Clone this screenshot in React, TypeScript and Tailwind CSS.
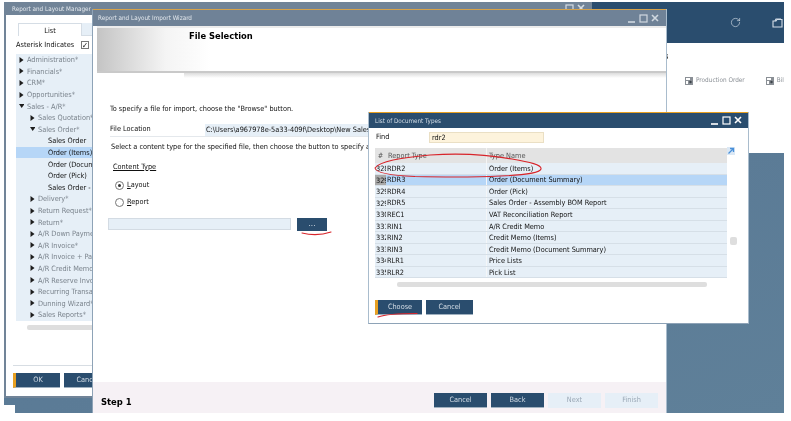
import { RotateCw } from "lucide-react";

const font = "font-['DejaVu_Sans_Condensed','Liberation_Sans',sans-serif]";

type TreeRow = { label: string; indent: number; arrow?: "right" | "down"; dark?: boolean; selected?: boolean };

const treeRows: TreeRow[] = [
  { label: "Administration*", indent: 0, arrow: "right" },
  { label: "Financials*", indent: 0, arrow: "right" },
  { label: "CRM*", indent: 0, arrow: "right" },
  { label: "Opportunities*", indent: 0, arrow: "right" },
  { label: "Sales - A/R*", indent: 0, arrow: "down" },
  { label: "Sales Quotation*", indent: 11, arrow: "right" },
  { label: "Sales Order*", indent: 11, arrow: "down" },
  { label: "Sales Order", indent: 24, dark: true },
  { label: "Order (Items)", indent: 24, dark: true, selected: true },
  { label: "Order (Document Summary)", indent: 24, dark: true },
  { label: "Order (Pick)", indent: 24, dark: true },
  { label: "Sales Order - Assembly", indent: 24, dark: true },
  { label: "Delivery*", indent: 11, arrow: "right" },
  { label: "Return Request*", indent: 11, arrow: "right" },
  { label: "Return*", indent: 11, arrow: "right" },
  { label: "A/R Down Payment", indent: 11, arrow: "right" },
  { label: "A/R Invoice*", indent: 11, arrow: "right" },
  { label: "A/R Invoice + Payment", indent: 11, arrow: "right" },
  { label: "A/R Credit Memo", indent: 11, arrow: "right" },
  { label: "A/R Reserve Invoice", indent: 11, arrow: "right" },
  { label: "Recurring Transactions", indent: 11, arrow: "right" },
  { label: "Dunning Wizard*", indent: 11, arrow: "right" },
  { label: "Sales Reports*", indent: 11, arrow: "right" },
];

const docRows = [
  ["328", "RDR2", "Order (Items)"],
  ["329", "RDR3", "Order (Document Summary)"],
  ["329", "RDR4", "Order (Pick)"],
  ["329", "RDR5", "Sales Order - Assembly BOM Report"],
  ["330", "REC1", "VAT Reconciliation Report"],
  ["331", "RIN1", "A/R Credit Memo"],
  ["332", "RIN2", "Credit Memo (Items)"],
  ["333", "RIN3", "Credit Memo (Document Summary)"],
  ["334", "RLR1", "Price Lists"],
  ["335", "RLR2", "Pick List"],
];

function WindowControls({ color }: { color: string }) {
  return (
    <svg width="32" height="9" viewBox="0 0 32 9" fill="none" stroke={color} strokeWidth="1.2">
      <path d="M1 8h7" strokeWidth="1.6" />
      <rect x="13" y="1" width="7" height="7" />
      <path d="M25 1l6 6M31 1l-6 6" strokeWidth="1.6" />
    </svg>
  );
}

function DarkButton({ label, accent, className }: { label: string; accent?: boolean; className: string }) {
  return (
    <div
      className={`h-[15px] bg-[#2a4d6e] text-[#d5dee7] text-[7.3px] leading-[14px] text-center border-b border-[#9fb0bf] ${
        accent ? "border-l-[3px] border-l-[#e8a021]" : ""
      } ${className}`}
    >
      {label}
    </div>
  );
}

function LightButton({ label }: { label: string }) {
  return <div className="w-[53px] h-[15px] bg-[#e6eff7] text-[#9aa8b6] text-[7.3px] leading-[14px] text-center">{label}</div>;
}

function Arrow({ dir }: { dir?: "right" | "down" }) {
  if (!dir) return <span className="w-[5px] shrink-0" />;
  return (
    <svg width="5" height="6" viewBox="0 0 5 6" className="shrink-0 mr-[3px]" fill="#1d1d1d">
      {dir === "right" ? <path d="M0.5 0L4.5 3L0.5 6Z" /> : <path d="M0 1H5.5L2.7 5Z" />}
    </svg>
  );
}

function ManagerWindow() {
  return (
    <div className="absolute left-[4px] top-[2px] w-[588px] h-[396px] bg-[#718498] flex flex-col">
      <div className="h-[13px] pl-[8px] pr-[7px] flex items-center justify-between text-[6.3px] leading-[13px] text-[#e3e8ed]">
        <span>Report and Layout Manager</span>
        <WindowControls color="#d6dde4" />
      </div>
      <div className="flex-1 ml-[2px] mr-[1px] mb-[2px] bg-white pl-[7px] pt-[8px] flex flex-col">
        <div className="flex h-[13px]">
          <div className="ml-[5px] w-[64px] border-x border-t border-[#d5dde5] text-[7.3px] text-[#111] text-center leading-[13px] bg-white">List</div>
          <div className="flex-1 bg-[#e6eff7] border-b border-[#d5dde5]" />
        </div>
        <div className="h-[12px] mt-[3px] flex items-center text-[7.3px] leading-[12px] text-[#111] whitespace-nowrap">
          <span className="w-[64px] ml-[3px]">Asterisk Indicates</span>
          <span className="w-[8px] h-[8px] ml-[1px] border border-[#777] text-[8px] leading-[7px] text-center font-bold text-black">✓</span>
        </div>
        <div className="mt-[3px] ml-[3px] h-[267px] w-[76px] bg-[#e6eff7] overflow-hidden">
          {treeRows.map((r) => (
            <div
              key={r.label}
              className={`h-[11.6px] flex items-center whitespace-nowrap text-[7.3px] leading-[11px] pl-[3px] ${r.selected ? "bg-[#b6d6f7]" : ""} ${
                r.dark ? "text-[#111]" : "text-[#7a838c]"
              }`}
            >
              <span className="shrink-0" style={{ width: r.indent }} />
              <Arrow dir={r.arrow} />
              {r.label}
            </div>
          ))}
        </div>
        <div className="mt-[4px] ml-[14px] h-[5px] w-[80px] rounded-[2px] bg-[#dedede]" />
        <div className="mt-[35px] h-[1px] w-[80px] bg-[#d7dde3]" />
        <div className="mt-[7px] flex gap-[4px]">
          <DarkButton label="OK" accent className="w-[47px]" />
          <DarkButton label="Cancel" className="w-[47px]" />
        </div>
      </div>
    </div>
  );
}

function WizardWindow() {
  return (
    <div className="absolute left-[92px] top-[9px] w-[575px] h-[404px] flex flex-col bg-white border-r border-[#a9bccd] border-l border-l-[#8ea3b7]">
      <div className="h-[17px] bg-[#6f8297] border-t border-[#d6a24a] pl-[5px] pr-[7px] flex items-center justify-between text-[6.3px] text-[#e3e8ed]">
        <span>Report and Layout Import Wizard</span>
        <WindowControls color="#d0d8e0" />
      </div>
      <div className="ml-[4px] h-[47px] border-t-2 border-t-[#ececec] border-b-2 border-[#c9c9c9] bg-[linear-gradient(90deg,#c4c4c4_0%,#f4f4f4_12%,#ffffff_20%)] pl-[92px] pt-[1px]">
        <div className="text-[9.3px] font-bold text-black leading-[14px]">File Selection</div>
      </div>
      <div className="ml-[91px] h-[5px] bg-[linear-gradient(180deg,#dcdcdc,#ffffff)]" />
      <div className="flex-1 pl-[17px] pt-[25px] text-[7.3px] text-[#111] flex flex-col">
        <div className="h-[12px] leading-[12px]">To specify a file for import, choose the "Browse" button.</div>
        <div className="mt-[8px] h-[14px] flex items-center border-b border-[#e4e8ec] w-[540px]">
          <span className="w-[95px]">File Location</span>
          <span className="flex-1 h-[12px] bg-[#e6eff7] leading-[12px] px-[1px] overflow-hidden whitespace-nowrap">
            C:\Users\a967978e-5a33-409f\Desktop\New Sales Order (Items).rpt
          </span>
        </div>
        <div className="mt-[4px] ml-[1px] h-[12px] leading-[12px] whitespace-nowrap">
          Select a content type for the specified file, then choose the button to specify a destination.
        </div>
        <div className="mt-[8px] ml-[3px] h-[12px] leading-[12px] underline">Content Type</div>
        <div className="mt-[6px] ml-[5px] h-[12px] leading-[12px] flex items-center gap-[3px]">
          <span className="w-[9px] h-[9px] rounded-full border border-[#777] flex items-center justify-center">
            <span className="w-[3px] h-[3px] rounded-full bg-[#333]" />
          </span>
          <span><u>L</u>ayout</span>
        </div>
        <div className="mt-[5px] ml-[5px] h-[12px] leading-[12px] flex items-center gap-[3px]">
          <span className="w-[9px] h-[9px] rounded-full border border-[#777]" />
          <span><u>R</u>eport</span>
        </div>
        <div className="mt-[10px] -ml-[2px] flex gap-[6px]">
          <div className="w-[183px] h-[12px] bg-[#e6eff7] border border-[#d3dbe3]" />
          <div className="w-[30px] h-[13px] bg-[#2a4d6e] text-[#d5dee7] text-[8px] leading-[11px] text-center">...</div>
        </div>
      </div>
      <div className="h-[31px] bg-[#f6f1f5] flex items-start justify-between pl-[8px] pr-[8px]">
        <span className="mt-[13px] text-[9.4px] font-bold text-black leading-[14px]">Step 1</span>
        <div className="mt-[11px] flex gap-[4px]">
          <DarkButton label="Cancel" className="w-[53px]" />
          <DarkButton label="Back" className="w-[53px]" />
          <LightButton label="Next" />
          <LightButton label="Finish" />
        </div>
      </div>
    </div>
  );
}

function DocTypesDialog() {
  return (
    <div className="absolute left-[368px] top-[112px] w-[381px] h-[212px] flex flex-col bg-white border-x border-b border-[#a9bccd] border-b-[#8ea3b7]">
      <div className="h-[16px] bg-[#2a4d6e] border-t border-[#e8a021] pl-[6px] pr-[6px] flex items-center justify-between text-[6.3px] text-[#d5dee7]">
        <span>List of Document Types</span>
        <WindowControls color="#ffffff" />
      </div>
      <div className="mt-[3px] ml-[7px] h-[12px] flex items-center text-[7.3px] text-[#111]">
        <span className="w-[53px]">Find</span>
        <span className="w-[115px] h-[11px] bg-[#fdf3dc] border border-[#eadfc4] leading-[9px] px-[2px]">rdr2</span>
      </div>
      <div className="mt-[5px] ml-[6px] w-[352px] text-[7.3px] leading-[11px] text-[#111]">
        <div className="h-[15px] bg-[#e3e3e3] flex items-center text-[#555]">
          <span className="w-[11px] text-center">#</span>
          <span className="w-[100px] pl-[2px]">Report Type</span>
          <span className="w-[1px] h-full bg-[#f4f4f4]" />
          <span className="pl-[2px]">Type Name</span>
        </div>
        {docRows.map((r, i) => (
          <div key={r[1] + i} className={`h-[11.55px] flex items-center border-b border-[#d6dfe7] ${i === 1 ? "bg-[#b6d6f7]" : "bg-[#e6eff7]"}`}>
            <span className={`w-[11px] h-full overflow-hidden pl-[1px] ${i === 1 ? "bg-[#a9a9a9]" : ""}`}>{r[0]}</span>
            <span className="w-[100px] pl-[1px]">{r[1]}</span>
            <span className="w-[1px] h-full bg-[#f4f6f8]" />
            <span className="pl-[2px] whitespace-nowrap">{r[2]}</span>
          </div>
        ))}
      </div>
      <div className="mt-[4px] ml-[28px] w-[310px] h-[5px] rounded-[2px] bg-[#dedede]" />
      <div className="mt-[13px] ml-[6px] flex gap-[4px]">
        <DarkButton label="Choose" accent className="w-[47px]" />
        <DarkButton label="Cancel" className="w-[47px]" />
      </div>
      {/* expand arrow */}
      <svg className="absolute left-[358px] top-[35px]" width="8" height="8" viewBox="0 0 8 8" fill="none" stroke="#4a90d9" strokeWidth="1.3">
        <rect width="8" height="8" fill="#dbe8f5" stroke="none" />
        <path d="M1.5 6.5L6.5 1.5M3 1.5h3.5V5" />
      </svg>
      {/* list scrollbar */}
      <div className="absolute left-[361px] top-[125px] w-[7px] h-[8px] bg-[#dedede] rounded-[2px]" />
    </div>
  );
}

function BackApp() {
  return (
    <div className="absolute left-[592px] top-[2px] w-[192px] h-[151px] flex flex-col">
      <div className="h-[41px] bg-[#2a4d6e] flex items-center text-[#d5dee7] pl-[138px] gap-[31px]">
        <RotateCw size={11} strokeWidth={1.4} />
        <svg width="11" height="10" viewBox="0 0 11 10" fill="none" stroke="#d5dee7" strokeWidth="1.1">
          <path d="M1 3h3l1-1.500h5V9H1z" />
          <path d="M3 3l1-2h5" />
        </svg>
      </div>
      <div className="relative flex-1 bg-white pl-[93px] pt-[33px] flex gap-[21px] text-[6.4px] leading-[9px] text-[#8a8f95] whitespace-nowrap overflow-hidden">
        <span className="absolute left-[72px] top-[9px] text-[8px] leading-[9px] font-bold text-[#333]">s</span>
        {["Production Order", "Bill"].map((t) => (
          <div key={t} className="flex items-center h-[9px] gap-[3px]">
            <svg width="8" height="8" viewBox="0 0 8 8" className="shrink-0">
              <rect width="8" height="8" fill="#8a8f95" />
              <rect x="1" y="1" width="4" height="2" fill="#fff" />
              <rect x="1" y="4" width="2" height="3" fill="#fff" />
              <circle cx="5.500" cy="5" r="1.200" fill="#3c434a" />
            </svg>
            {t}
          </div>
        ))}
      </div>
    </div>
  );
}

function Annotations() {
  return (
    <svg className="absolute inset-0 pointer-events-none" width="791" height="421" viewBox="0 0 791 421" fill="none" stroke="#d8242a" strokeWidth="1.1" strokeLinecap="round">
      <path d="M375 168C380 161 400 158 430 155C460 153 490 155 512 159C530 162 542 165 541 169C540 173 525 175 500 176C470 177.500 440 177 415 176.500C392 175.500 376 173 375 168Z" />
      <path d="M302 233C312 235.500 322 235 331 232" />
      <path d="M378 317C386 314 400 313.500 417 313.500" strokeWidth="1.200" />
    </svg>
  );
}

export default function App() {
  return (
    <div className={`relative w-[791px] h-[421px] overflow-hidden bg-white blur-[0.3px] ${font}`}>
      {/* Desktop */}
      <div className="absolute left-[4px] top-[2px] w-[780px] h-[411px] bg-[linear-gradient(160deg,#557595_0%,#5b7b96_60%,#5f8099_100%)]" />
      <div className="absolute left-0 top-[405px] w-[15px] h-[16px] bg-white" />
      <BackApp />
      <ManagerWindow />
      <WizardWindow />
      <DocTypesDialog />
      <Annotations />
    </div>
  );
}
